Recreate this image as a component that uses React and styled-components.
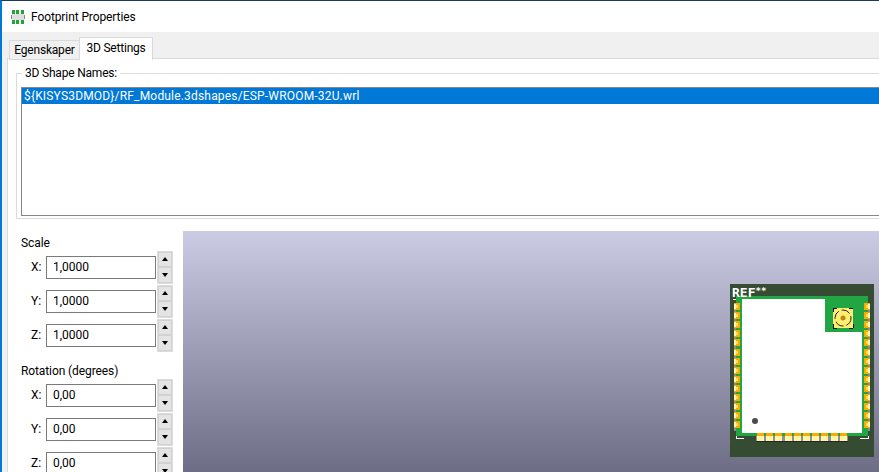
import React from 'react';
import styled, {createGlobalStyle} from 'styled-components';

const GlobalStyle = createGlobalStyle`
    html, body {
        margin: 0;
        padding: 0;
        width: 879px;
        height: 472px;
        overflow: hidden;
        background: #ffffff;
        font-family: Roboto, "Noto Sans", sans-serif;
        font-size: 12px;
        color: #000000;
    }
`

const Window = styled.div`
    box-sizing: border-box;
    width: 879px;
    height: 472px;
    overflow: hidden;
    display: flex;
    flex-direction: column;
    border-top: 1px solid #1a3a5a;
    border-left: 2px solid #0078d7;
    background: #ffffff;
`
const TitleBar = styled.div`
    height: 31px;
    flex: none;
    display: flex;
    align-items: center;
    gap: 6px;
    padding-left: 9px;
    font-size: 12px;
    letter-spacing: -0.1px;
`
const Body = styled.div`
    flex: 1;
    min-height: 0;
    display: flex;
    flex-direction: column;
    background: #f0f0f0;
`
const TabStrip = styled.div`
    height: 27px;
    flex: none;
    display: flex;
    align-items: flex-end;
    padding-left: 7px;
`
const Tab = styled.div`
    box-sizing: border-box;
    height: ${props => props.$active ? '23px' : '20px'};
    width: ${props => props.$active ? '74px' : '70px'};
    margin-bottom: -1px;
    position: relative;
    display: flex;
    align-items: center;
    justify-content: center;
    background: ${props => props.$active ? '#ffffff' : '#f0f0f0'};
    border: 1px solid #d9d9d9;
    border-bottom: ${props => props.$active ? 'none' : '1px solid #d9d9d9'};
    border-right: ${props => props.$active ? '1px solid #d9d9d9' : 'none'};
    font-size: 12px;
    line-height: 16px;
    letter-spacing: -0.2px;
    padding-bottom: ${props => props.$active ? '3px' : '0'};
`
const Page = styled.div`
    flex: 1;
    min-height: 0;
    display: flex;
    flex-direction: column;
    margin-left: 5px;
    padding-left: 8px;
    background: #ffffff;
    border-top: 1px solid #d9d9d9;
    border-left: 1px solid #d9d9d9;
    margin-top: -1px;
`
const GroupBox = styled.fieldset`
    box-sizing: border-box;
    height: 153px;
    width: 900px;
    margin: 7px 0 0 0;
    padding: 0 0 2px 4px;
    flex: none;
    border: 1px solid #dcdcdc;
    display: flex;
`
const GroupLegend = styled.legend`
    margin-left: 1px;
    padding: 0 3px;
    font-size: 12px;
    line-height: 15px;
    letter-spacing: -0.2px;
`
const ListBox = styled.div`
    box-sizing: border-box;
    width: 100%;
    height: 129px;
    margin-top: 6px;
    border: 1px solid #828790;
    border-right: none;
`
const ListRow = styled.div`
    height: 16px;
    line-height: 16px;
    background: #0078d7;
    color: #ffffff;
    font-size: 12px;
    letter-spacing: 0.18px;
    padding-left: 2px;
    white-space: nowrap;
`
const Lower = styled.div`
    flex: 1;
    min-height: 0;
    display: flex;
    margin-top: 12px;
`
const SidePanel = styled.div`
    width: 167px;
    flex: none;
    padding: 5px 0 0 5px;
    box-sizing: border-box;
`
const SectionLabel = styled.div`
    font-size: 12px;
    line-height: 14px;
    height: 14px;
    letter-spacing: -0.1px;
`
const FieldRow = styled.div`
    display: flex;
    align-items: center;
    height: 34px;
`
const AxisLabel = styled.span`
    width: 25px;
    padding-left: 10px;
    box-sizing: border-box;
    font-size: 12px;
`
const ValueInput = styled.div`
    box-sizing: border-box;
    width: 110px;
    height: 23px;
    border: 1px solid #7a7a7a;
    padding-left: 6px;
    font-size: 12px;
    line-height: 20px;
`
const Spinner = styled.div`
    box-sizing: border-box;
    width: 16px;
    height: 33px;
    margin-left: 1px;
    display: flex;
    flex-direction: column;
    border: 1px solid #dcdcdc;
`
const SpinButton = styled.div`
    box-sizing: border-box;
    flex: 1;
    background: #e4e4e4;
    border: 1px solid #d2d2d2;
    display: flex;
    align-items: center;
    justify-content: center;
`
const Arrow = styled.span`
    width: 0;
    height: 0;
    border-left: 3.5px solid transparent;
    border-right: 3.5px solid transparent;
    border-bottom: ${props => props.$down ? 'none' : '4px solid #000'};
    border-top: ${props => props.$down ? '4px solid #000' : 'none'};
`
const Group = styled.div`
    margin-bottom: ${props => props.$gap || 0}px;
`
const Preview = styled.div`
    width: 696px;
    flex: none;
    display: flex;
    align-items: flex-start;
    justify-content: flex-end;
    padding: 53px 5px 0 0;
    box-sizing: border-box;
    background: linear-gradient(180deg, #cbcbe3 0%, #6d6d86 100%);
`

function FootprintIcon() {
    return (
        <svg width="14" height="14" viewBox="0 0 14 14" shapeRendering="crispEdges">
            <rect x="1" y="4" width="12" height="6" fill="#dedede" />
            {[1, 5, 10].map(x => <rect key={x} x={x} y="0" width="3" height="4" fill="#1fa535" />)}
            {[1, 5, 10].map(x => <rect key={x} x={x} y="10" width="3" height="4" fill="#1fa535" />)}
            <rect x="0" y="5" width="1" height="4" fill="#8a8a8a" />
            <rect x="13" y="5" width="1" height="4" fill="#8a8a8a" />
        </svg>
    )
}

const PADS = Array.from({length: 14}, (_, i) => 19 + Math.round(i * 9.1));
const BOTTOM = Array.from({length: 10}, (_, i) => 27 + Math.round(i * 9.2));

function SidePad({x, y, mirror}) {
    return (
        <g>
            <rect x={x} y={y} width={6} height={7} fill="#ffa800" />
            <rect x={mirror ? x + 4 : x} y={y + 1} width={2} height={5} fill="#fff6c0" />
            <rect x={x + 2} y={y + 2} width={2} height={3} fill="#ffe060" />
        </g>
    )
}

function BottomPad({x}) {
    return (
        <g>
            <rect x={x} y={149} width={7} height={3} fill="#ffa800" />
            <rect x={x} y={152} width={7} height={5} fill="#fff6a0" />
        </g>
    )
}

function PcbView() {
    return (
        <svg width="144" height="173" viewBox="0 0 144 173" shapeRendering="crispEdges">
            <rect width="144" height="173" fill="#354c33" />
            <rect x="4" y="19" width="6" height="128" fill="#8f8c9e" />
            <rect x="134" y="19" width="6" height="128" fill="#8f8c9e" />
            <rect x="26" y="150" width="92" height="7" fill="#8f8c9e" />
            <rect x="26" y="157" width="92" height="1" fill="#222230" />
            <rect x="6" y="12" width="132" height="140" fill="#22a543" />
            <rect x="12" y="15" width="120" height="134" fill="#ffffff" />
            <rect x="95" y="12" width="37" height="36" fill="#22a543" />
            {PADS.map(y => <SidePad key={'l' + y} x={4} y={y} />)}
            {PADS.map(y => <SidePad key={'r' + y} x={134} y={y} mirror />)}
            {BOTTOM.map(x => <BottomPad key={x} x={x} />)}
            <rect x="103" y="24" width="20" height="20" fill="#ffee70" />
            <path d="M103 24h4M119 24h4M103 44h4M119 44h4M103 24v4M103 40v4M123 40v4" fill="none" stroke="#111" strokeWidth="1" />
            <g shapeRendering="auto">
                <circle cx="113" cy="34" r="8" fill="none" stroke="#222" strokeWidth="1" strokeDasharray="9 3" />
                <circle cx="113" cy="34" r="2.5" fill="#b88a10" />
                <circle cx="25" cy="137" r="3" fill="#4a4a4a" />
            </g>
            <path d="M6 152v2h8M138 152v2h-8" fill="none" stroke="#ffffff" strokeWidth="1" />
            <rect x="3" y="15" width="3" height="1" fill="#ffffff" />
            <text x="2" y="13" fill="#ffffff" fontFamily="'DejaVu Sans Mono', monospace" fontSize="13" fontWeight="bold">REF<tspan fontSize="9" dy="-3">**</tspan></text>
        </svg>
    )
}

function Field({axis, value}) {
    return (
        <FieldRow>
            <AxisLabel>{axis}:</AxisLabel>
            <ValueInput>{value}</ValueInput>
            <Spinner>
                <SpinButton><Arrow /></SpinButton>
                <SpinButton><Arrow $down /></SpinButton>
            </Spinner>
        </FieldRow>
    )
}

export default function App() {
    return (
        <Window>
            <GlobalStyle />
            <TitleBar><FootprintIcon />Footprint Properties</TitleBar>
            <Body>
                <TabStrip>
                    <Tab>Egenskaper</Tab>
                    <Tab $active>3D Settings</Tab>
                </TabStrip>
                <Page>
                    <GroupBox>
                        <GroupLegend>3D Shape Names:</GroupLegend>
                        <ListBox>
                            <ListRow>{'${KISYS3DMOD}/RF_Module.3dshapes/ESP-WROOM-32U.wrl'}</ListRow>
                        </ListBox>
                    </GroupBox>
                    <Lower>
                        <SidePanel>
                            <Group $gap={12}>
                                <SectionLabel>Scale</SectionLabel>
                                <Field axis="X" value="1,0000" />
                                <Field axis="Y" value="1,0000" />
                                <Field axis="Z" value="1,0000" />
                            </Group>
                            <Group>
                                <SectionLabel>Rotation (degrees)</SectionLabel>
                                <Field axis="X" value="0,00" />
                                <Field axis="Y" value="0,00" />
                                <Field axis="Z" value="0,00" />
                            </Group>
                        </SidePanel>
                        <Preview><PcbView /></Preview>
                    </Lower>
                </Page>
            </Body>
        </Window>
    )
}
